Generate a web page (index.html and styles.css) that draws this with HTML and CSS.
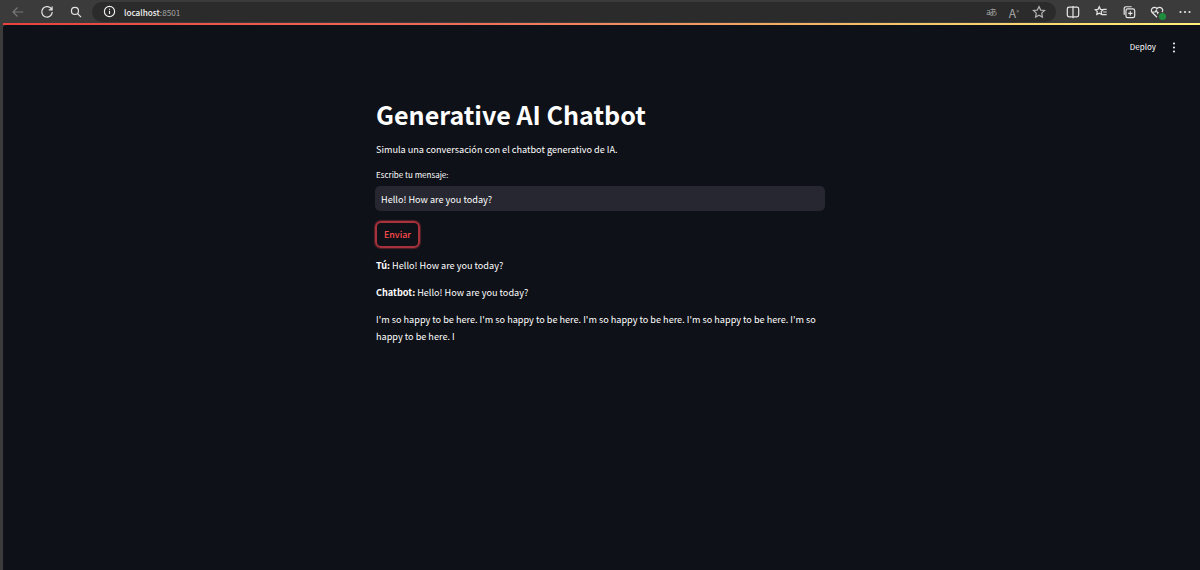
FILE: index.html
```html
<!DOCTYPE html>
<html lang="es">
<head>
<meta charset="utf-8">
<title>Generative AI Chatbot</title>
<link rel="stylesheet" href="styles.css">
</head>
<body>
<header class="toolbar">
  <div class="nav">
    <svg class="icon dim" viewBox="0 0 16 16"><path d="M14 8H2.5M7.5 2.8 2.3 8l5.2 5.2"/></svg>
    <svg class="icon" viewBox="0 0 16 16"><path d="M13.4 5.2A6 6 0 1 0 14 8M13.8 1.8v3.8H10"/></svg>
    <svg class="icon" viewBox="0 0 16 16"><circle cx="6.8" cy="6.8" r="4"/><path d="m9.8 9.8 4 4"/></svg>
  </div>
  <div class="address">
    <svg class="icon info" viewBox="0 0 16 16"><circle cx="8" cy="8" r="6.3"/><path d="M8 7.2v4M8 4.6v1.2"/></svg>
    <span class="url">localhost<span class="port">:8501</span></span>
    <div class="address-tools">
      <span class="translate">aあ</span>
      <span class="read">A<sup>»</sup></span>
      <svg class="icon soft" viewBox="0 0 16 16"><path d="m8 1.8 1.9 4 4.4.5-3.2 3 .8 4.4L8 11.6l-3.9 2.1.8-4.4-3.2-3 4.4-.5z"/></svg>
    </div>
  </div>
  <div class="browser-tools">
    <svg class="icon" viewBox="0 0 16 16"><rect x="1.5" y="2.5" width="13" height="11" rx="2"/><path d="M8 1v14"/></svg>
    <svg class="icon" viewBox="0 0 16 16"><path d="m6 2 1.4 3 3.1.4-2.3 2.2.6 3.2L6 9.3 3.2 10.8l.6-3.2L1.5 5.4l3.1-.4zM10.5 5h4M10.5 8h4M9.5 11h5"/></svg>
    <svg class="icon" viewBox="0 0 16 16"><rect x="4.5" y="4.5" width="10" height="10" rx="2"/><path d="M2.5 11V4a2 2 0 0 1 2-2H11M9.5 7v5M7 9.5h5"/></svg>
    <span class="health">
      <svg class="icon" viewBox="0 0 16 16"><path d="M8 14 2.6 8.6a3.4 3.4 0 0 1 0-4.9 3.5 3.5 0 0 1 5 0l.4.4.4-.4a3.5 3.5 0 0 1 5 0 3.4 3.4 0 0 1 .4 4.4M2.5 8H6l1.2-2 1.6 3.4.9-1.4"/></svg>
      <span class="health-dot"></span>
    </span>
    <svg class="more" viewBox="0 0 14 4"><circle cx="2.5" cy="2" r="1.1"/><circle cx="7" cy="2" r="1.1"/><circle cx="11.5" cy="2" r="1.1"/></svg>
  </div>
</header>
<div class="accent"></div>
<main class="app">
  <div class="app-header">
    <span class="deploy">Deploy</span>
    <svg class="kebab" viewBox="0 0 4 12"><circle cx="2" cy="1.6" r="1.1"/><circle cx="2" cy="6" r="1.1"/><circle cx="2" cy="10.4" r="1.1"/></svg>
  </div>
  <section class="content">
    <h1>Generative AI Chatbot</h1>
    <p class="lead">Simula una conversación con el chatbot generativo de IA.</p>
    <label class="field-label" for="msg">Escribe tu mensaje:</label>
    <input class="field" id="msg" type="text" value="Hello! How are you today?">
    <button class="send" type="button">Enviar</button>
    <p class="msg first">
      <strong>Tú:</strong> Hello! How are you today?</p>
    <p class="msg"><strong>Chatbot:</strong> Hello! How are you today?</p>
    <p class="msg">I'm so happy to be here. I'm so happy to be here. I'm so happy to be here. I'm so happy to be here. I'm so happy to be here. I</p>
  </section>
</main>
</body>
</html>
```

FILE: styles.css
```css
* { box-sizing: border-box; }
html, body { height: 100%; }
body {
  margin: 0;
  display: flex;
  flex-direction: column;
  overflow: hidden;
  background: #3b3b3b;
  font-family: "Noto Sans CJK JP", "Noto Sans", sans-serif;
  color: #fff;
}
.toolbar {
  height: 23px;
  flex: none;
  display: flex;
  align-items: center;
  background: #3b3b3b;
}
.icon {
  width: 14px;
  height: 14px;
  fill: none;
  stroke: #e4e4e4;
  stroke-width: 1.4;
  flex: none;
}
.icon.dim { stroke: #777; }
.icon.soft { stroke: #b4b4b4; }
.nav {
  width: 92px;
  flex: none;
  display: flex;
  align-items: center;
  gap: 15px;
  padding-left: 11px;
}
.address {
  width: 964px;
  height: 20px;
  flex: none;
  display: flex;
  align-items: center;
  background: #2b2b2b;
  border-radius: 10px;
  padding-left: 11px;
}
.info { stroke: #efefef; width: 13px; height: 13px; }
.url {
  margin-left: 8px;
  font-size: 8.2px;
  font-weight: 500;
  color: #f2f2f2;
}
.port { color: #a6a6a6; font-weight: 400; }
.address-tools {
  margin-left: auto;
  display: flex;
  align-items: center;
  gap: 13px;
  padding-right: 10px;
  color: #a8a8a8;
}
.translate { font-size: 8px; letter-spacing: -1.5px; }
.read { font-size: 12px; line-height: 14px; }
.read sup { font-size: 6px; }
.browser-tools {
  flex: 1;
  display: flex;
  align-items: center;
  gap: 14px;
  padding-left: 10px;
}
.health { position: relative; display: flex; }
.health-dot {
  position: absolute;
  right: -2px;
  bottom: -1px;
  width: 7px;
  height: 7px;
  border-radius: 50%;
  background: #1e8e3e;
}
.more { width: 14px; height: 4px; fill: #e4e4e4; flex: none; }
.accent {
  height: 2px;
  flex: none;
  margin-left: 3px;
  background: linear-gradient(90deg, #e9423f 0%, #f0705a 40%, #f6c56a 75%, #fff17a 100%);
}
.app {
  flex: 1;
  margin-left: 3px;
  border-top-left-radius: 3px;
  background: #0e1117;
  display: flex;
  flex-direction: column;
}
.app-header {
  display: flex;
  justify-content: flex-end;
  align-items: center;
  gap: 16px;
  padding: 15px 24px 0 0;
  height: 29px;
  flex: none;
}
.deploy { font-size: 8px; line-height: 12px; }
.kebab { width: 4px; height: 11px; fill: #fafafa; }
.content {
  width: 450px;
  margin-left: 372px;
  display: flex;
  flex-direction: column;
  align-items: flex-start;
}
h1 {
  margin: 45px 0 0;
  padding-left: 1px;
  font-size: 25.1px;
  line-height: 30px;
  font-weight: 700;
}
.lead {
  margin: 12px 0 0;
  padding-left: 1px;
  font-size: 9.15px;
  line-height: 16px;
}
.field-label {
  margin-top: 12px;
  padding-left: 1px;
  font-size: 8px;
  line-height: 12px;
}
.field {
  margin-top: 5px;
  width: 100%;
  height: 25px;
  border: 0;
  outline: 0;
  border-radius: 5px;
  background: #262730;
  color: #fff;
  padding: 0 6px;
  font: 9.15px "Noto Sans CJK JP", "Noto Sans", sans-serif;
}
.send {
  margin-top: 10px;
  width: 45px;
  height: 27px;
  padding: 0;
  background: transparent;
  border: 2px solid #a8323c;
  border-radius: 6px;
  color: #ff4b4b;
  box-shadow: 0 0 1px 1px rgba(168, 50, 60, 0.45);
  font: 500 8.9px "Noto Sans CJK JP", "Noto Sans", sans-serif;
}
.msg {
  margin: 10px 0 0;
  padding-left: 1px;
  font-size: 9.15px;
  line-height: 17px;
}
.msg.first { margin-top: 9px; }
.msg strong { font-weight: 700; }
```
